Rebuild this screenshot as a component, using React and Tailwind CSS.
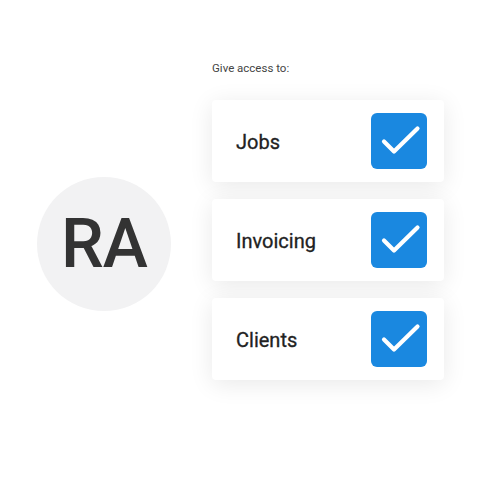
import React from "react";

const items = ["Jobs", "Invoicing", "Clients"];

function CheckBox() {
    return (
        <div className="w-14 h-14 rounded-[6px] bg-[#1a88e0] flex items-center justify-center">
            <svg width="56" height="56" viewBox="0 0 56 56" fill="none">
                <path d="M13 28.5 L23 38.5 L46.5 15.5" stroke="#fff" strokeWidth="4.2" strokeLinecap="round" strokeLinejoin="round" />
            </svg>
        </div>
    );
}

export default function App() {
    return (
        <div className="w-[480px] h-[480px] bg-white relative font-['Roboto',sans-serif] text-[#333]">
            <div className="flex items-start pt-[60px]">
                <div className="ml-[37px] mt-[117px] w-[134px] h-[134px] rounded-full bg-[#f2f2f3] flex items-center justify-center">
                    <span className="text-[68px] leading-none font-medium tracking-[-1px] text-[#333]">RA</span>
                </div>
                <div className="ml-[41px] w-[232px]">
                    <p className="text-[11.5px] leading-[16px] text-[#444]">Give access to:</p>
                    <div className="mt-[24px] flex flex-col gap-[17px]">
                        {items.map((it) => (
                            <div
                                key={it}
                                className="h-[82px] bg-white rounded-[4px] shadow-[0_4px_24px_rgba(0,0,0,0.09)] flex items-center justify-between pl-[24px] pr-[17px]"
                            >
                                <span className="pt-[2px] text-[20px] font-normal text-[#222] [-webkit-text-stroke:0.3px_#222]">{it}</span>
                                <CheckBox />
                            </div>
                        ))}
                    </div>
                </div>
            </div>
        </div>
    );
}
